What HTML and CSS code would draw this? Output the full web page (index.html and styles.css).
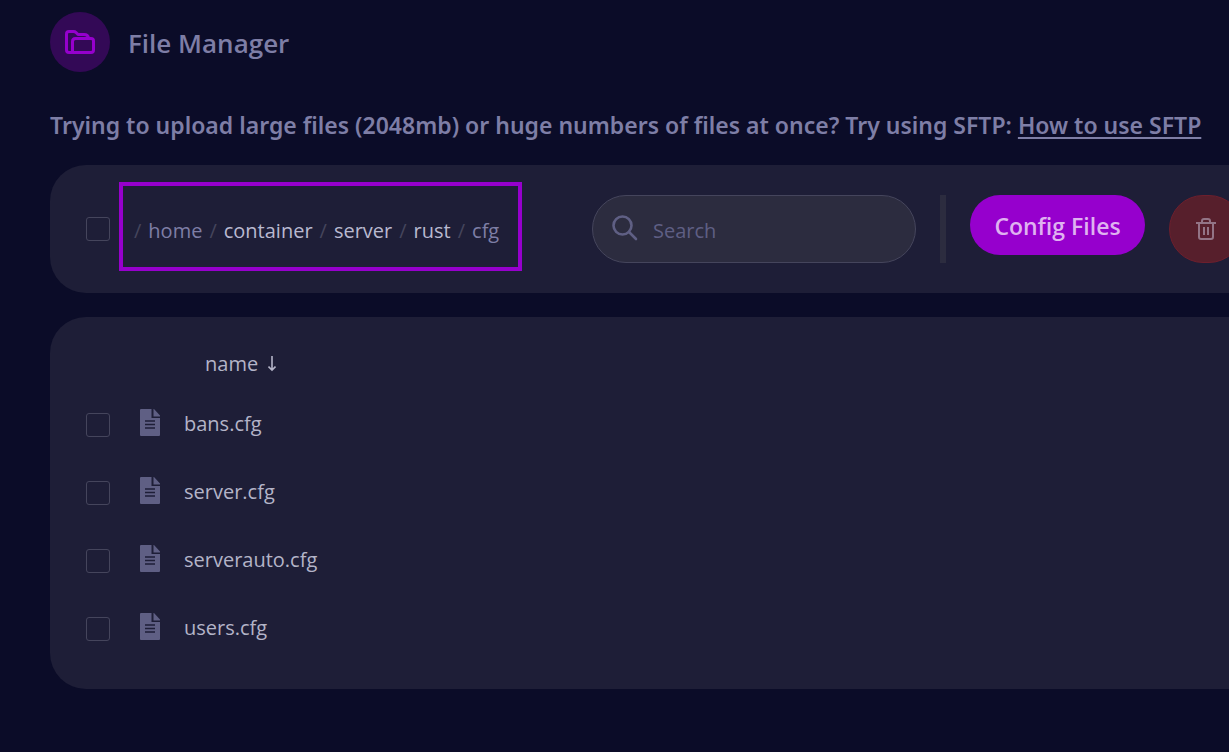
FILE: index.html
```html
<!DOCTYPE html>
<html lang="en">
<head>
<meta charset="utf-8">
<title>File Manager</title>
<link rel="stylesheet" href="styles.css">
</head>
<body>
<svg class="sprite" aria-hidden="true">
  <symbol id="file" viewBox="0 0 20 27">
    <path fill="currentColor" d="M1 0H11.500V9H20V26Q20 27 19 27H1Q0 27 0 26V1Q0 0 1 0ZM14 0L20 6.500V7.500H13.500V0Z"/>
    <path stroke="#1e1e37" stroke-width="1.300" d="M5 12h10M5 15.500h10M5 19h10"/>
  </symbol>
</svg>
<main class="page">
  <header class="header">
    <span class="badge">
      <svg width="30" height="24" viewBox="0 0 30 24" fill="none" stroke="currentColor" stroke-width="3" stroke-linejoin="round">
        <path d="M7.500 22.500H4Q1.500 22.500 1.500 20V4Q1.500 1.500 4 1.500H8.500Q10 1.500 11 2.500L13 4.500H19Q23 4.500 23.500 8"/>
        <path d="M7.500 22.500V11.500Q7.500 8.500 10.500 8.500H26Q28.500 8.500 28.500 11V20Q28.500 22.500 26 22.500Z"/>
      </svg>
    </span>
    <h1 class="title">File Manager</h1>
  </header>
  <p class="notice">Trying to upload large files (2048mb) or huge numbers of files at once? Try using SFTP: <a href="#sftp">How to use SFTP</a></p>

  <section class="panel toolbar">
    <input class="check" type="checkbox" aria-label="Select all files">
    <nav class="crumbs" aria-label="Path">
      <span class="slash">/</span><span>home</span>
      <span class="slash">/</span><a href="#container">container</a>
      <span class="slash">/</span><a href="#server">server</a>
      <span class="slash">/</span><a href="#rust">rust</a>
      <span class="slash">/</span><span>cfg</span>
    </nav>
    <div class="actions">
      <label class="search">
        <svg width="26" height="26" viewBox="0 0 26 26" fill="none" stroke="currentColor" stroke-width="2.600" stroke-linecap="round">
          <circle cx="10.500" cy="9.500" r="9"/><path d="M17 16L24 23"/>
        </svg>
        <input type="text" placeholder="Search" aria-label="Search">
      </label>
      <span class="divider"></span>
      <button class="config" type="button">Config Files</button>
      <button class="delete" type="button" aria-label="Delete">
        <svg width="20" height="22" viewBox="0 0 20 22" fill="none" stroke="currentColor" stroke-width="2">
          <path d="M0 5H20M6 5V3Q6 1 8 1H12Q14 1 14 3V5M3 5V19Q3 21 5 21H15Q17 21 17 19V5M8 9V17M12 9V17"/>
        </svg>
      </button>
    </div>
  </section>

  <section class="panel files">
    <button class="sort" type="button">name
      <svg width="8" height="16" viewBox="0 0 8 16" fill="none" stroke="currentColor" stroke-width="1.600"><path d="M4 0V14M0.500 10.500L4 14L7.500 10.500"/></svg>
    </button>
    <ul class="list">
      <li class="row"><input class="check" type="checkbox" id="f1"><svg class="file"><use href="#file"/></svg><label for="f1">bans.cfg</label></li>
      <li class="row"><input class="check" type="checkbox" id="f2"><svg class="file"><use href="#file"/></svg><label for="f2">server.cfg</label></li>
      <li class="row"><input class="check" type="checkbox" id="f3"><svg class="file"><use href="#file"/></svg><label for="f3">serverauto.cfg</label></li>
      <li class="row"><input class="check" type="checkbox" id="f4"><svg class="file"><use href="#file"/></svg><label for="f4">users.cfg</label></li>
    </ul>
  </section>
</main>
</body>
</html>
```
FILE: styles.css
```css
* { box-sizing: border-box; }
body {
  margin: 0;
  background: #0b0c28;
  color: #b4b4c8;
  font: 20px/28px "Open Sans", "Noto Sans", sans-serif;
  overflow-x: hidden;
}
button, input { font: inherit; }
.sprite { position: absolute; width: 0; height: 0; }
.page { padding: 12px 0 24px 50px; overflow: hidden; }
.header { display: flex; align-items: center; gap: 18px; }
.badge {
  display: grid;
  place-items: center;
  width: 60px;
  height: 60px;
  border-radius: 50%;
  background: #330956;
  color: #9600cd;
}
.title {
  margin: 0;
  padding-top: 2px;
  color: #7e7ea6;
  font-size: 26px;
  font-weight: 600;
  line-height: 32px;
}
.notice {
  margin: 37px 0 24px;
  color: #7e7ea6;
  font-family: "Noto Sans", "Open Sans", sans-serif;
  font-size: 23px;
  font-weight: 600;
  line-height: 32px;
  white-space: nowrap;
}
.notice a { color: inherit; text-underline-offset: 3px; text-decoration-thickness: 2px; }
.panel {
  background: #1e1e37;
  border-radius: 36px 0 0 36px;
}
.toolbar {
  display: flex;
  align-items: flex-start;
  height: 128px;
  padding-left: 36px;
}
.check {
  appearance: none;
  flex: none;
  width: 24px;
  height: 24px;
  margin: 0;
  border: 1px solid #45455c;
  border-radius: 3px;
}
.check:checked { background: #9600cd; }
.toolbar .check { margin-top: 52px; }
.crumbs {
  display: flex;
  align-items: center;
  gap: 7px;
  height: 89px;
  margin: 17px 0 0 9px;
  padding: 8px 19px 0 11px;
  border: 4px solid #9600cd;
  color: #7e7ea6;
}
.crumbs a { color: #b9b9d0; text-decoration: none; }
.crumbs .slash { color: #45455c; }
.actions {
  display: flex;
  gap: 24px;
  margin: 30px -14px 0 auto;
}
.search {
  display: flex;
  align-items: center;
  gap: 15px;
  width: 324px;
  height: 68px;
  padding: 0 19px;
  border: 1px solid #45455c;
  border-radius: 34px;
  background: #2c2c3f;
  color: #5f5f84;
}
.search svg { flex: none; overflow: visible; }
.search input {
  width: 100%;
  min-width: 0;
  padding: 3px 0 0;
  border: 0;
  outline: 0;
  background: none;
  color: #b4b4c8;
}
.search input::placeholder { color: #5f5f84; opacity: 1; }
.divider { width: 6px; height: 68px; background: #2c2c3f; }
.config {
  width: 175px;
  height: 60px;
  padding: 2px 0 0;
  border: 0;
  border-radius: 30px;
  background: #9600cd;
  color: #dfb2f0;
  font-size: 23px;
  font-weight: 600;
  white-space: nowrap;
}
.delete {
  display: grid;
  place-items: center;
  width: 74px;
  height: 68px;
  padding: 0;
  border: 1px solid #6d1f2d;
  border-radius: 34px;
  background: #571f2c;
  color: #937486;
}
.files { margin-top: 24px; padding: 33px 36px 26px; }
.sort {
  display: flex;
  align-items: center;
  gap: 10px;
  margin: 0 0 13px 119px;
  padding: 0;
  border: 0;
  background: none;
  color: #b4b4c8;
}
.list { margin: 0; padding: 0; list-style: none; }
.row { display: flex; align-items: center; height: 68px; }
.row label { padding-bottom: 3px; }
.file { width: 20px; height: 27px; margin: 0 24px 6px 30px; color: #5f5f84; }
```
